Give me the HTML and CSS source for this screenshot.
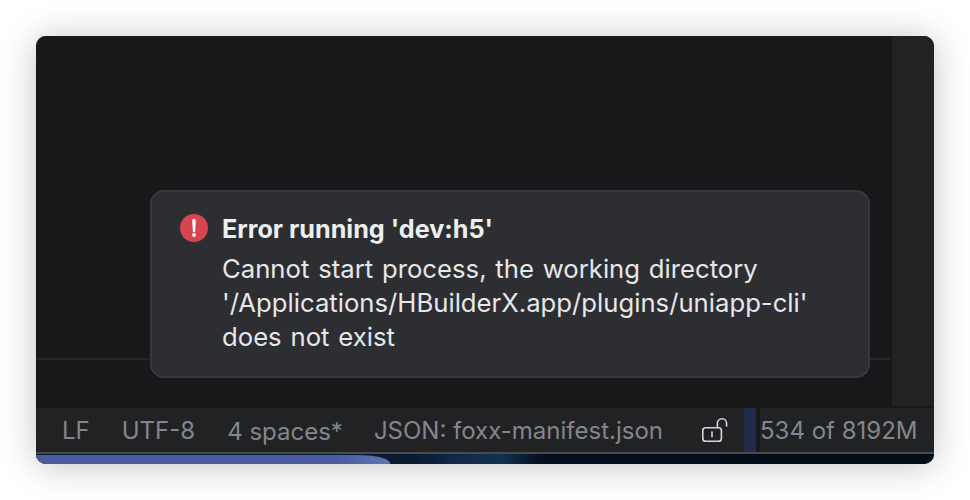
FILE: index.html
```html
<!DOCTYPE html>
<html lang="en">
<head>
<meta charset="utf-8">
<title>Error running dev:h5</title>
<link rel="stylesheet" href="styles.css">
</head>
<body>
<div class="window">
  <div class="workspace">
    <div class="editor">
      <div class="editor-top"></div>
      <div class="editor-bottom"></div>
    </div>
    <div class="sidebar"></div>
  </div>
  <div class="statusbar">
    <span class="st st-lf">LF</span>
    <span class="st st-enc">UTF-8</span>
    <span class="st st-indent">4 spaces*</span>
    <span class="st st-schema">JSON: foxx-manifest.json</span>
    <svg class="lock" width="26" height="24" viewBox="0 0 26 24" fill="none" stroke="#d4d5d9" stroke-width="1.6">
      <rect x="0.8" y="9.8" width="18.6" height="13.4" rx="2.8"/>
      <path d="M10 14v4.6" stroke-linecap="round"/>
      <path d="M15.4 9.8V5.4a4.6 4.6 0 0 1 9.2 0V8" stroke-linecap="round"/>
    </svg>
    <span class="mem-used"></span>
    <span class="mem-gap"></span>
    <span class="st st-mem">534 of 8192M</span>
  </div>
  <div class="rule"></div>
  <div class="desktop"><div class="dock-tab"></div></div>
  <div class="toast">
    <svg class="toast-icon" width="28" height="28" viewBox="0 0 28 28">
      <circle cx="14" cy="14" r="14" fill="#d6464f"/>
      <path d="M12.2 6.6a1.8 1.8 0 0 1 3.6 0L15.2 17a1.2 1.2 0 0 1-2.4 0z" fill="#fff"/>
      <circle cx="14" cy="21" r="1.9" fill="#fff"/>
    </svg>
    <div class="toast-text">
      <div class="toast-title">Error running 'dev:h5'</div>
      <div class="toast-body">Cannot start process, the working directory<br>'/Applications/HBuilderX.app/plugins/uniapp-cli'<br>does not exist</div>
    </div>
  </div>
</div>
</body>
</html>
```
FILE: styles.css
```css
html, body {
  margin: 0;
  padding: 0;
  background: #fff;
}
body {
  width: 970px;
  height: 500px;
  padding: 36px;
  box-sizing: border-box;
  overflow: hidden;
  font-family: Inter, "Liberation Sans", sans-serif;
}
.window {
  position: relative;
  width: 898px;
  height: 428px;
  border-radius: 10px;
  overflow: hidden;
  background: #18181a;
  display: flex;
  flex-direction: column;
  box-shadow: 0 2px 36px rgba(0, 0, 0, 0.24);
}
.workspace {
  height: 370px;
  display: flex;
  flex: none;
}
.editor {
  flex: 1;
  display: flex;
  flex-direction: column;
  padding-right: 2px;
}
.editor-top {
  height: 322px;
  background: #18181a;
  border-bottom: 2px solid #272729;
  flex: none;
}
.editor-bottom {
  flex: 1;
  background: #18181a;
}
.sidebar {
  width: 42px;
  background: #212224;
  flex: none;
}
.statusbar {
  margin-top: 2px;
  height: 44px;
  flex: none;
  background: #212224;
  display: flex;
  align-items: center;
  color: #85868d;
  font-size: 24px;
  white-space: nowrap;
}
.st {
  display: block;
}
.st-lf { margin-left: 26px; }
.st-enc { margin-left: 32px; }
.st-indent { margin-left: 32px; position: relative; top: 1px; }
.st-schema { margin-left: 31px; }
.lock {
  margin-left: 39px;
  flex: none;
}
.mem-used {
  margin-left: 16px;
  width: 12px;
  height: 44px;
  background: #1f2a4d;
  flex: none;
}
.mem-gap {
  width: 4px;
  height: 44px;
  background: #18181a;
  flex: none;
}
.st-mem {
  margin-left: 0;
}
.rule {
  height: 2px;
  background: #4a4b4d;
  flex: none;
}
.desktop {
  flex: 1;
  padding-top: 1px;
  background: linear-gradient(100deg, #071a30 0, #071a30 42%, #13294a 47%, #14304f 52%, #04101f 56%, #020c18 100%);
}
.dock-tab {
  width: 354px;
  height: 100%;
  background: linear-gradient(90deg, #4a5b9e 0, #4a5ca0 85%, #5f74b0 100%);
  border-top-right-radius: 34px 8px;
}
.toast {
  position: absolute;
  left: 114px;
  top: 154px;
  width: 720px;
  height: 188px;
  box-sizing: border-box;
  padding: 22px 28px 0 28px;
  background: #2d2e32;
  border: 2px solid #37383c;
  border-radius: 14px;
  display: flex;
  gap: 14px;
}
.toast-icon {
  flex: none;
}
.toast-title {
  color: #eeeff1;
  font-size: 25.2px;
  font-weight: 700;
  line-height: 30px;
}
.toast-body {
  color: #e6e7ea;
  font-size: 25.7px;
  word-spacing: 1.6px;
  line-height: 34px;
  margin-top: 8px;
}
```
